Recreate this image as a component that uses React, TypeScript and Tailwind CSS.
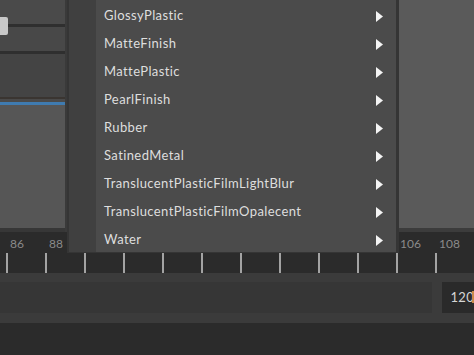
import React from 'react';

const MATERIALS = [
  'GlossyPlastic',
  'MatteFinish',
  'MattePlastic',
  'PearlFinish',
  'Rubber',
  'SatinedMetal',
  'TranslucentPlasticFilmLightBlur',
  'TranslucentPlasticFilmOpalecent',
  'Water',
];

const FRAMES = [86, 88, 90, 92, 94, 96, 98, 100, 102, 104, 106, 108];

export default function App() {
  return (
    <div
      className="relative w-[474px] h-[355px] overflow-hidden bg-[#2b2b2b] flex flex-col"
      style={{ fontFamily: '"Lato", "Noto Sans", sans-serif' }}
    >
      {/* Top area: attribute panel + viewport */}
      <div className="flex h-[232px] shrink-0">
        <div className="relative w-[67px] flex flex-col border-r-2 border-[#3a3a3a]">
          <div className="h-[24px] bg-[#4a4a4a]" />
          <div className="h-[3px] bg-[#2f2f2f]" />
          <div className="h-[24px] bg-[#484848]" />
          <div className="h-[3px] bg-[#2f2f2f]" />
          <div className="h-[43px] bg-[#444444]" />
          <div className="h-[2px] bg-[#3a3531]" />
          <div className="h-[3px] bg-[#4a4a4a]" />
          <div className="h-[3px] bg-[#3f7bb0]" />
          <div className="flex-1 bg-[#565656]" />
          <div className="h-[4px] bg-[#373737]" />
          {/* slider handle */}
          <div className="absolute left-0 top-[17px] w-[8px] h-[18px] rounded-r-[2px] bg-[#c8c8c8]" />
        </div>
        <div className="flex-1 flex flex-col">
          <div className="flex-1 bg-[#5a5a5a]" />
          <div className="h-[4px] bg-[#3c3c3c]" />
        </div>
      </div>

      {/* Time ruler */}
      <div className="h-[41px] shrink-0 bg-[#2b2b2b] flex pl-[6px]">
        {FRAMES.map((f) => (
          <div key={f} className="w-[39px] shrink-0 flex flex-col">
            <div className="h-[21px] pl-[4px] pt-[5px] text-[12px] leading-[14px] text-[#8a8a8a]">{f}</div>
            <div className="h-[20px] border-l-2 border-[#a3a3a3]" />
          </div>
        ))}
      </div>

      {/* Range slider row */}
      <div className="shrink-0 bg-[#3b3b3b] pt-[9px] pb-[10px] flex gap-[10px]">
        <div className="w-[433px] h-[31px] bg-[#363636]" />
        <div className="flex-1 h-[31px] bg-[#2a2a2a] flex items-center pl-[8px] relative">
          <span className="text-[13px] tracking-[0.3px] text-[#d6d6d6]">120</span>
          <div className="absolute right-0 top-[9px] w-[2px] h-[12px] bg-[#c98a4a]" />
        </div>
      </div>
      <div className="flex-1 bg-[#2b2b2b]" />

      {/* Dropdown menu */}
      <div className="absolute left-[67px] top-0 w-[332px] h-[253px] flex border-l-2 border-r-[3px] border-b border-[#353535] bg-[#4b4b4b]">
        <div className="w-[27px] bg-[#404040]" />
        <div className="flex-1 flex flex-col pt-[2px]">
          {MATERIALS.map((m) => (
            <div key={m} className="h-[28px] shrink-0 flex items-center pl-[8px] pr-[13px]">
              <span className="flex-1 text-[13px] tracking-[0.4px] text-[#dedede]">{m}</span>
              <svg width="7" height="11" viewBox="0 0 7 11">
                <polygon points="0,0 7,5.5 0,11" fill="#f4f4f4" />
              </svg>
            </div>
          ))}
        </div>
      </div>
    </div>
  );
}
